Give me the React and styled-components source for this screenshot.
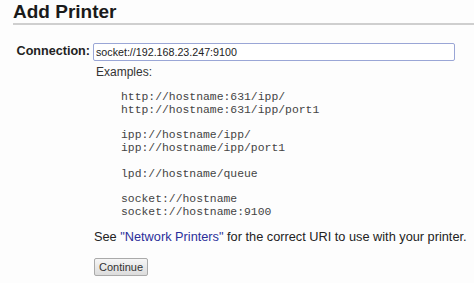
import React from "react";
import styled, { createGlobalStyle } from "styled-components";

const examples = [
  ["http://hostname:631/ipp/", "http://hostname:631/ipp/port1"],
  ["ipp://hostname/ipp/", "ipp://hostname/ipp/port1"],
  ["lpd://hostname/queue"],
  ["socket://hostname", "socket://hostname:9100"]
];

function App() {
  return (
    <Page>
      <GlobalStyle />
      <Title>Add Printer</Title>
      <Form>
        <Label>Connection:</Label>
        <Field>
          <UriInput defaultValue="socket://192.168.23.247:9100" />
          <Examples>Examples:</Examples>
          <Pre>
            {examples.map((group, i) => (
              <Group key={i}>
                {group.map(line => (
                  <div key={line}>{line}</div>
                ))}
              </Group>
            ))}
          </Pre>
          <Note>
            See <Link href="#">"Network Printers"</Link> for the correct URI to
            use with your printer.
          </Note>
          <Button>Continue</Button>
        </Field>
      </Form>
    </Page>
  );
}

export default App;

const GlobalStyle = createGlobalStyle`
  html, body {
    margin: 0;
    background: #fdfdfd;
  }
  body {
    font-family: "Liberation Sans", Arial, sans-serif;
    color: #222;
  }
`;

const Page = styled.div`
  padding: 0 0 0 13px;
  width: 474px;
  height: 283px;
  box-sizing: border-box;
  overflow: hidden;
`;

const Title = styled.h1`
  margin: 0;
  padding-top: 1px;
  font-size: 19px;
  line-height: 22px;
  font-weight: bold;
  color: #1a1a1a;
  border-bottom: 2px solid #cfcfcf;
`;

const Form = styled.div`
  display: grid;
  grid-template-columns: 77px 362px;
  column-gap: 3px;
  margin-top: 18px;
`;

const Label = styled.div`
  text-align: right;
  font-weight: bold;
  font-size: 12.6px;
  line-height: 17px;
  color: #222;
`;

const Field = styled.div`
  display: flex;
  flex-direction: column;
  align-items: flex-start;
`;

const UriInput = styled.input`
  box-sizing: border-box;
  width: 362px;
  height: 18px;
  margin: 0;
  padding: 0 2px;
  border: 1px solid #9aa6d6;
  border-radius: 2px;
  font-family: "Liberation Sans", Arial, sans-serif;
  font-size: 10.7px;
  color: #222;
  background: #fff;
  outline: none;
`;

const Examples = styled.div`
  margin: 4px 0 0 3px;
  font-size: 12px;
  line-height: 14px;
  color: #333;
`;

const Pre = styled.div`
  margin: 12px 0 0 28px;
  font-family: "Liberation Mono", "Courier New", monospace;
  font-size: 11.4px;
  line-height: 12.8px;
  color: #444;
  display: flex;
  flex-direction: column;
  gap: 12.8px;
`;

const Group = styled.div``;

const Note = styled.div`
  margin: 10px 0 0 1px;
  font-size: 12.75px;
  line-height: 15px;
  color: #222;
  white-space: nowrap;
`;

const Link = styled.a`
  color: #2b2f9a;
  text-decoration: none;
`;

const Button = styled.button`
  margin: 14px 0 0 1px;
  width: 54px;
  height: 18px;
  padding: 0;
  font-family: "Liberation Sans", Arial, sans-serif;
  font-size: 11px;
  color: #333;
  border: 1px solid #aaa;
  border-radius: 2px;
  background: linear-gradient(#f6f6f6, #dcdcdc);
`;
